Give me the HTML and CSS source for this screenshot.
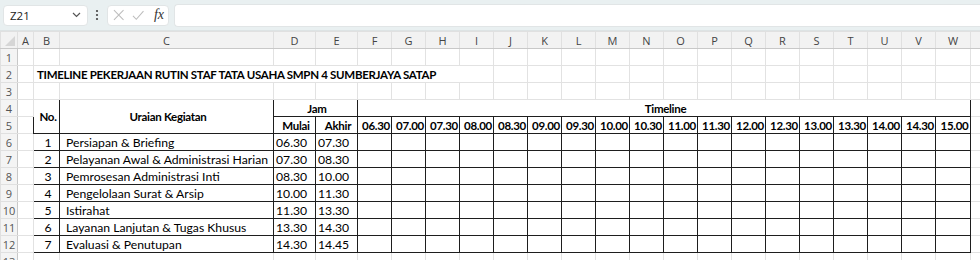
FILE: index.html
```html
<!DOCTYPE html>
<html>
	<head>
		<meta charset="utf-8" />
		<title>Timeline TU</title>
		<link rel="stylesheet" href="styles.css">
	</head>
	<body>
		<div class="formula-bar">
			<div class="name-box">
				<span>Z21</span>
				<svg class="chevron" width="9" height="6" viewBox="0 0 9 6"><path d="M1 1 L4.5 4.5 L8 1" fill="none" stroke="#555" stroke-width="1.2"/></svg>
			</div>
			<svg class="dots" width="4" height="12" viewBox="0 0 4 12"><circle cx="2" cy="2" r="1.1" fill="#444"/><circle cx="2" cy="6" r="1.1" fill="#444"/><circle cx="2" cy="10" r="1.1" fill="#444"/></svg>
			<div class="fx-box">
				<svg width="12" height="12" viewBox="0 0 12 12"><path d="M1 1 L11 11 M11 1 L1 11" stroke="#bdbdbd" stroke-width="1.1"/></svg>
				<svg width="13" height="11" viewBox="0 0 13 11"><path d="M1 6 L4.5 9.5 L12 1" fill="none" stroke="#bdbdbd" stroke-width="1.1"/></svg>
				<span class="fx">fx</span>
			</div>
			<div class="formula-input"></div>
		</div>

		<table class="sheet">
			<colgroup>
				<col class="c-rh"><col class="c-a"><col class="c-b"><col class="c-c"><col class="c-d"><col class="c-e">
				<col class="c-t"><col class="c-t"><col class="c-t"><col class="c-t"><col class="c-t"><col class="c-t">
				<col class="c-t"><col class="c-t"><col class="c-t"><col class="c-t"><col class="c-t"><col class="c-t">
				<col class="c-t"><col class="c-t"><col class="c-t"><col class="c-t"><col class="c-t"><col class="c-w">
				<col class="c-x">
			</colgroup>
			<thead>
				<tr class="col-head">
					<th class="corner"><span class="tri"></span></th>
					<th>A</th><th>B</th><th>C</th><th>D</th><th>E</th><th>F</th><th>G</th><th>H</th><th>I</th><th>J</th><th>K</th>
					<th>L</th><th>M</th><th>N</th><th>O</th><th>P</th><th>Q</th><th>R</th><th>S</th><th>T</th><th>U</th><th>V</th><th>W</th><th></th>
				</tr>
			</thead>
			<tbody>
				<tr>
					<th class="rh">1</th>
					<td></td><td></td><td></td><td></td><td></td><td></td><td></td><td></td><td></td><td></td><td></td><td></td>
					<td></td><td></td><td></td><td></td><td></td><td></td><td></td><td></td><td></td><td></td><td></td><td></td>
				</tr>
				<tr>
					<th class="rh">2</th>
					<td></td>
					<td colspan="8" class="title">TIMELINE PEKERJAAN RUTIN STAF TATA USAHA SMPN 4 SUMBERJAYA SATAP</td>
					<td></td><td></td><td></td><td></td><td></td><td></td><td></td><td></td><td></td><td></td><td></td><td></td><td></td><td></td><td></td>
				</tr>
				<tr>
					<th class="rh">3</th>
					<td></td><td></td><td></td><td></td><td></td><td></td><td></td><td></td><td></td><td></td><td></td><td></td>
					<td></td><td></td><td></td><td></td><td></td><td></td><td></td><td></td><td></td><td></td><td></td><td></td>
				</tr>
				<tr>
					<th class="rh">4</th>
					<td></td>
					<td rowspan="2" class="box hd">No.</td>
					<td rowspan="2" class="box hd">Uraian Kegiatan</td>
					<td colspan="2" class="box hd">Jam</td>
					<td colspan="18" class="box hd">Timeline</td>
					<td></td>
				</tr>
				<tr>
					<th class="rh">5</th>
					<td></td>
					<td class="box hd">Mulai</td><td class="box hd">Akhir</td>
					<td class="box hd">06.30</td><td class="box hd">07.00</td><td class="box hd">07.30</td><td class="box hd">08.00</td>
					<td class="box hd">08.30</td><td class="box hd">09.00</td><td class="box hd">09.30</td><td class="box hd">10.00</td>
					<td class="box hd">10.30</td><td class="box hd">11.00</td><td class="box hd">11.30</td><td class="box hd">12.00</td>
					<td class="box hd">12.30</td><td class="box hd">13.00</td><td class="box hd">13.30</td><td class="box hd">14.00</td>
					<td class="box hd">14.30</td><td class="box hd">15.00</td>
					<td></td>
				</tr>
				<tr>
					<th class="rh">6</th><td></td>
					<td class="box num">1</td><td class="box task">Persiapan &amp; Briefing</td><td class="box time">06.30</td><td class="box time">07.30</td>
					<td class="box"></td><td class="box"></td><td class="box"></td><td class="box"></td><td class="box"></td><td class="box"></td>
					<td class="box"></td><td class="box"></td><td class="box"></td><td class="box"></td><td class="box"></td><td class="box"></td>
					<td class="box"></td><td class="box"></td><td class="box"></td><td class="box"></td><td class="box"></td><td class="box"></td>
					<td></td>
				</tr>
				<tr>
					<th class="rh">7</th><td></td>
					<td class="box num">2</td><td class="box task">Pelayanan Awal &amp; Administrasi Harian</td><td class="box time">07.30</td><td class="box time">08.30</td>
					<td class="box"></td><td class="box"></td><td class="box"></td><td class="box"></td><td class="box"></td><td class="box"></td>
					<td class="box"></td><td class="box"></td><td class="box"></td><td class="box"></td><td class="box"></td><td class="box"></td>
					<td class="box"></td><td class="box"></td><td class="box"></td><td class="box"></td><td class="box"></td><td class="box"></td>
					<td></td>
				</tr>
				<tr>
					<th class="rh">8</th><td></td>
					<td class="box num">3</td><td class="box task">Pemrosesan Administrasi Inti</td><td class="box time">08.30</td><td class="box time">10.00</td>
					<td class="box"></td><td class="box"></td><td class="box"></td><td class="box"></td><td class="box"></td><td class="box"></td>
					<td class="box"></td><td class="box"></td><td class="box"></td><td class="box"></td><td class="box"></td><td class="box"></td>
					<td class="box"></td><td class="box"></td><td class="box"></td><td class="box"></td><td class="box"></td><td class="box"></td>
					<td></td>
				</tr>
				<tr>
					<th class="rh">9</th><td></td>
					<td class="box num">4</td><td class="box task">Pengelolaan Surat &amp; Arsip</td><td class="box time">10.00</td><td class="box time">11.30</td>
					<td class="box"></td><td class="box"></td><td class="box"></td><td class="box"></td><td class="box"></td><td class="box"></td>
					<td class="box"></td><td class="box"></td><td class="box"></td><td class="box"></td><td class="box"></td><td class="box"></td>
					<td class="box"></td><td class="box"></td><td class="box"></td><td class="box"></td><td class="box"></td><td class="box"></td>
					<td></td>
				</tr>
				<tr>
					<th class="rh">10</th><td></td>
					<td class="box num">5</td><td class="box task">Istirahat</td><td class="box time">11.30</td><td class="box time">13.30</td>
					<td class="box"></td><td class="box"></td><td class="box"></td><td class="box"></td><td class="box"></td><td class="box"></td>
					<td class="box"></td><td class="box"></td><td class="box"></td><td class="box"></td><td class="box"></td><td class="box"></td>
					<td class="box"></td><td class="box"></td><td class="box"></td><td class="box"></td><td class="box"></td><td class="box"></td>
					<td></td>
				</tr>
				<tr>
					<th class="rh">11</th><td></td>
					<td class="box num">6</td><td class="box task">Layanan Lanjutan &amp; Tugas Khusus</td><td class="box time">13.30</td><td class="box time">14.30</td>
					<td class="box"></td><td class="box"></td><td class="box"></td><td class="box"></td><td class="box"></td><td class="box"></td>
					<td class="box"></td><td class="box"></td><td class="box"></td><td class="box"></td><td class="box"></td><td class="box"></td>
					<td class="box"></td><td class="box"></td><td class="box"></td><td class="box"></td><td class="box"></td><td class="box"></td>
					<td></td>
				</tr>
				<tr>
					<th class="rh">12</th><td></td>
					<td class="box num">7</td><td class="box task">Evaluasi &amp; Penutupan</td><td class="box time">14.30</td><td class="box time">14.45</td>
					<td class="box"></td><td class="box"></td><td class="box"></td><td class="box"></td><td class="box"></td><td class="box"></td>
					<td class="box"></td><td class="box"></td><td class="box"></td><td class="box"></td><td class="box"></td><td class="box"></td>
					<td class="box"></td><td class="box"></td><td class="box"></td><td class="box"></td><td class="box"></td><td class="box"></td>
					<td></td>
				</tr>
				<tr>
					<th class="rh">13</th>
					<td></td><td></td><td></td><td></td><td></td><td></td><td></td><td></td><td></td><td></td><td></td><td></td>
					<td></td><td></td><td></td><td></td><td></td><td></td><td></td><td></td><td></td><td></td><td></td><td></td>
				</tr>
			</tbody>
		</table>
	</body>
</html>
```

FILE: styles.css
```css
body {
	margin: 0;
	padding: 0;
	width: 980px;
	height: 260px;
	overflow: hidden;
	background: #ffffff;
	font-family: "Lato", "Liberation Sans", sans-serif;
}

/* formula bar */

.formula-bar {
	display: flex;
	align-items: center;
	gap: 5px;
	height: 31px;
	padding: 0 0 0 3px;
	box-sizing: border-box;
	background: #e9f0f1;
	border-bottom: 1px solid #dde3e4;
}

.name-box {
	display: flex;
	align-items: center;
	justify-content: space-between;
	width: 85px;
	height: 21px;
	padding: 0 6px 0 6px;
	box-sizing: border-box;
	background: #fff;
	border: 1px solid #e1e5e6;
	border-radius: 4px;
	font-family: "Open Sans", "Liberation Sans", sans-serif;
	font-size: 11.5px;
	color: #222;
}

.dots {
	margin: 0 3px 0 2px;
}

.fx-box {
	display: flex;
	align-items: center;
	gap: 8px;
	width: 62px;
	height: 21px;
	padding: 0 4px 0 5px;
	box-sizing: border-box;
	background: #fff;
	border: 1px solid #e1e5e6;
	border-radius: 4px;
}

.fx {
	font-family: "Liberation Serif", serif;
	font-style: italic;
	font-size: 14px;
	color: #333;
	margin-left: 1px;
}

.formula-input {
	flex: 1;
	height: 21px;
	background: #fff;
	border: 1px solid #e1e5e6;
	border-right: none;
	border-radius: 4px 0 0 4px;
}

/* sheet grid */

.sheet {
	border-collapse: collapse;
	table-layout: fixed;
	width: 990px;
	font-size: 12.2px;
	color: #000;
}

.c-rh { width: 17px; }
.c-a { width: 16px; }
.c-b { width: 26px; }
.c-c { width: 214px; }
.c-d { width: 42px; }
.c-e { width: 42px; }
.c-t { width: 34px; }
.c-w { width: 35px; }
.c-x { width: 20px; }

.sheet tr {
	height: 17px;
}

.sheet td {
	padding: 0 0 0 3px;
	border: 1px solid #e2e2e2;
	white-space: nowrap;
	overflow: hidden;
	line-height: 15px;
}

.col-head th {
	height: 16px;
	padding: 0;
	background: #f2f2f2;
	border: 1px solid #e0e0e0;
	border-bottom: 1px solid #c8c8c8;
	font-family: "Open Sans", "Liberation Sans", sans-serif;
	font-weight: normal;
	font-size: 11px;
	color: #444;
}

.corner {
	position: relative;
}

.corner .tri {
	position: absolute;
	right: 2px;
	bottom: 2px;
	border-left: 10px solid transparent;
	border-bottom: 10px solid #d6d6d6;
}

.rh {
	padding: 0;
	background: #f4f4f4;
	border: 1px solid #e0e0e0;
	border-right: 1px solid #c8c8c8;
	font-family: "Open Sans", "Liberation Sans", sans-serif;
	font-weight: normal;
	font-size: 11px;
	color: #555;
	text-align: center;
}

.title {
	font-weight: bold;
	font-size: 11.5px;
	letter-spacing: -0.3px;
	padding-left: 2px;
	border-left-color: transparent;
}

.sheet td.box {
	border: 1px solid #1e1e1e;
}

.hd {
	font-weight: bold;
	font-size: 11.5px;
	letter-spacing: -0.3px;
	text-align: center;
	padding: 0;
}

.num {
	text-align: center;
	padding: 0;
}

.sheet td.task {
	padding-left: 6px;
}

.sheet td.time {
	padding-left: 2px;
}
```
